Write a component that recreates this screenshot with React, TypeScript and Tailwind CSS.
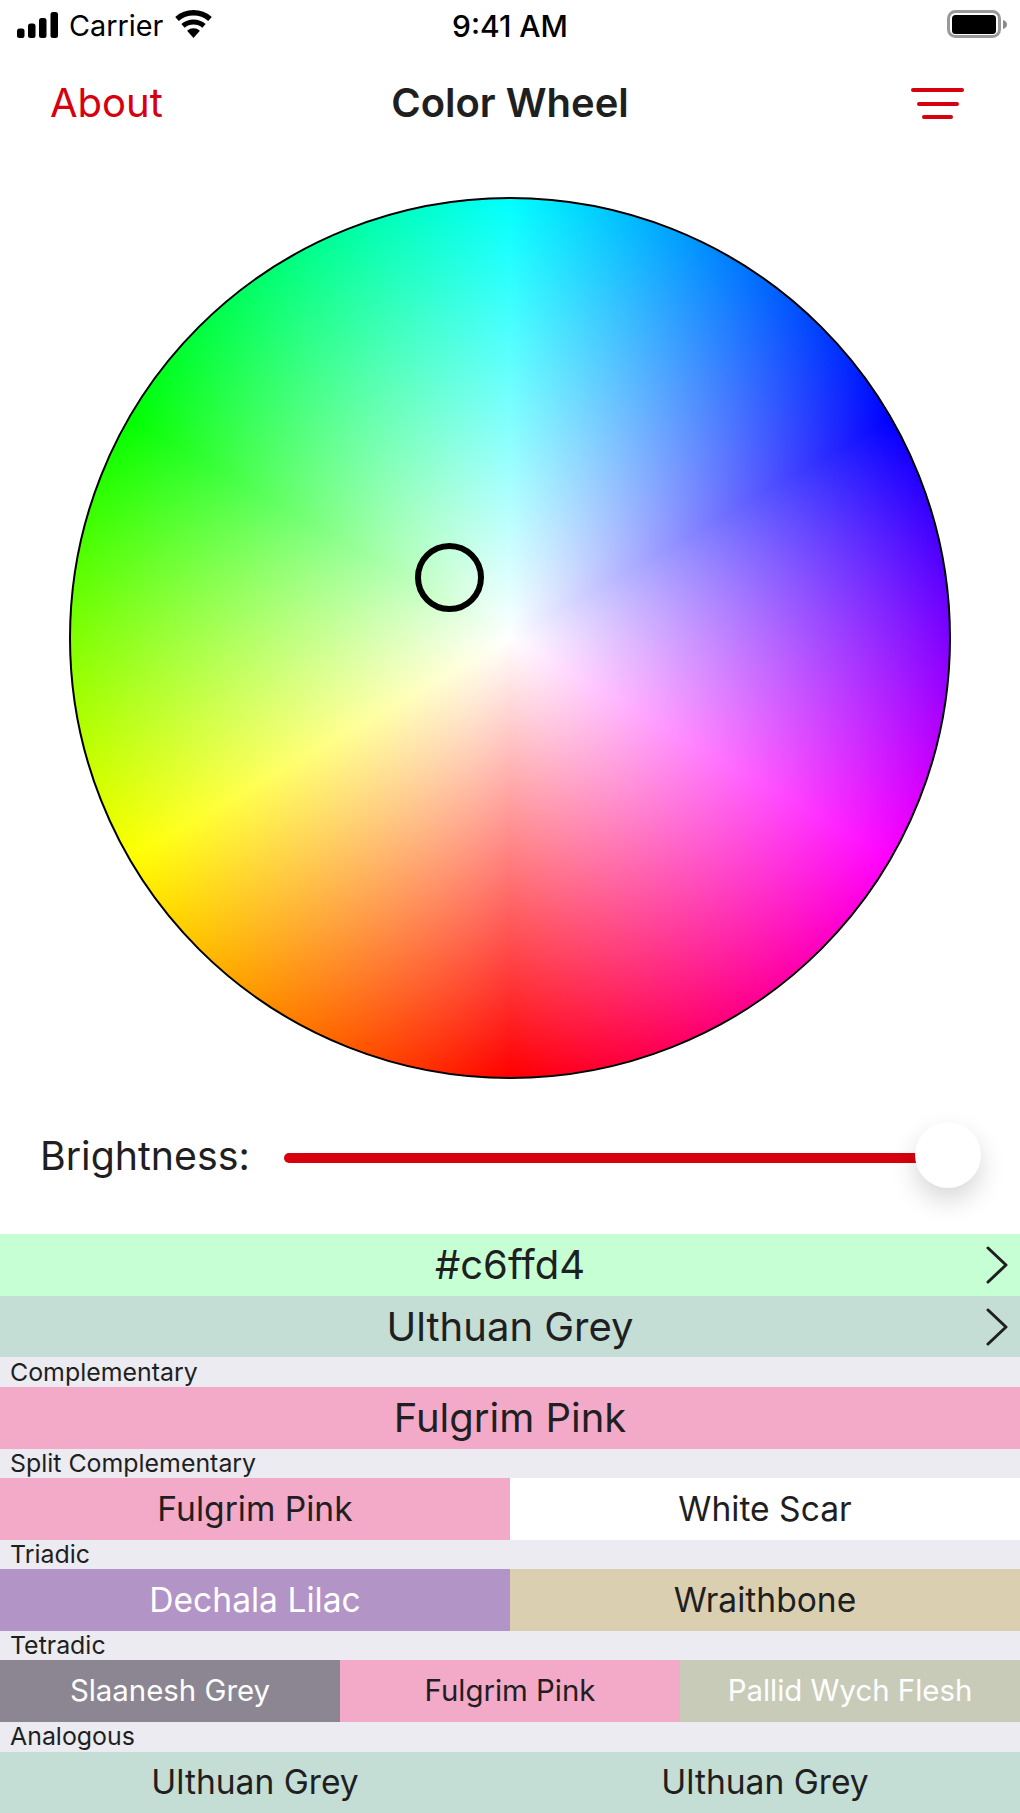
const font = "font-['Inter','Liberation_Sans',sans-serif]";

const StatusBar = () => (
  <div className="relative flex h-[52px] items-center justify-between pl-[17px] pr-[13px] text-black">
    <div className="flex items-center">
      <svg className="-mt-[2px]" width="41" height="26" viewBox="0 0 41 26" fill="black">
        <rect x="0" y="16.500" width="7.500" height="9.500" rx="2.500" />
        <rect x="11" y="11.500" width="7.500" height="14.500" rx="2.500" />
        <rect x="22" y="6" width="7.500" height="20" rx="2.500" />
        <rect x="33.500" y="0" width="7.500" height="26" rx="2.500" />
      </svg>
      <span className="ml-[11px] text-[28.800px] leading-none">Carrier</span>
      <svg className="-mt-[4px] ml-[12px]" width="37" height="28" viewBox="0 0 37 28" fill="none" stroke="black">
        <path d="M2 9 A25.200 25.200 0 0 1 35 9" strokeWidth="5.500" />
        <path d="M8 15.900 A16 16 0 0 1 29 15.900" strokeWidth="5" />
        <path d="M18.500 28 L12.100 20.700 A9.700 9.700 0 0 1 24.900 20.700 Z" fill="black" stroke="none" />
      </svg>
    </div>
    <span className="absolute left-[452px] text-[30px] font-medium leading-none">9:41 AM</span>
    <svg className="-mt-[4px]" width="60" height="28" viewBox="0 0 60 28" fill="none">
      <rect x="1.500" y="1.500" width="51" height="25" rx="7" stroke="#999" strokeWidth="3" />
      <rect x="5" y="5" width="44" height="19" rx="3.500" fill="black" />
      <path d="M56 10 C58.500 10.800 60 12.200 60 14.500 C60 16.800 58.500 18.200 56 19 Z" fill="#8a8a8a" />
    </svg>
  </div>
);

const NavBar = () => (
  <div className="relative flex h-[100px] items-center justify-between pl-[50px] pr-[56px] pt-[2px]">
    <span className="text-[40px] leading-none text-[#d6000e]">About</span>
    <span className="absolute inset-x-0 text-center text-[40px] font-semibold leading-none text-[#1f1f21]">
      Color Wheel
    </span>
    <div className="mt-[1px] flex flex-col items-center gap-[9.500px]">
      <div className="h-[4px] w-[53px] rounded-full bg-[#d6000e]" />
      <div className="h-[4px] w-[42px] rounded-full bg-[#d6000e]" />
      <div className="h-[4px] w-[31px] rounded-full bg-[#d6000e]" />
    </div>
  </div>
);

const Wheel = () => (
  <div className="relative mx-auto mt-[45px] h-[882px] w-[882px] rounded-full border-2 border-black bg-[radial-gradient(circle_closest-side,#ffffff_0%,rgba(255,255,255,0)_100%),conic-gradient(#00ffff,#0000ff_60deg,#ff00ff_120deg,#ff0000_180deg,#ffff00_240deg,#00ff00_300deg,#00ffff)]">
    <div className="absolute left-[344px] top-[344px] h-[69px] w-[69px] rounded-full border-[6px] border-black" />
  </div>
);

const Brightness = () => (
  <div className="mt-[44px] flex h-[66px] items-center pl-[40px] pr-[39px]">
    <span className="w-[244px] text-[39.300px] leading-none text-[#1f1f21]">Brightness:</span>
    <div className="relative mr-[33px] mt-[3px] h-[10px] flex-1 rounded-l-full bg-[#d6000e]">
      <div className="absolute right-[-33px] top-[-31px] h-[66px] w-[66px] rounded-full bg-white shadow-[0_12px_26px_rgba(0,0,0,0.16)]" />
    </div>
  </div>
);

const Chevron = () => (
  <svg className="absolute right-[11px] top-1/2 -translate-y-1/2" width="24" height="38" viewBox="0 0 24 38" fill="none" stroke="#1f1f21" strokeWidth="3" strokeLinecap="round" strokeLinejoin="round">
    <path d="M3 2 L21 19 L3 36" />
  </svg>
);

const Row = ({ bg, children, chevron, light, size = 'text-[33.600px]' }: { bg: string; children: React.ReactNode; chevron?: boolean; light?: boolean; size?: string }) => (
  <div className={`relative flex h-full flex-1 items-center justify-center ${bg} ${size} ${light ? 'text-white' : 'text-[#1f1f21]'}`}>
    {children}
    {chevron && <Chevron />}
  </div>
);

const Label = ({ children }: { children: React.ReactNode }) => (
  <div className="flex h-[29.500px] items-center bg-[#ebebf1] pl-[10px] text-[24.900px] leading-none text-[#1f1f21]">{children}</div>
);

const Swatches = ({ children }: { children: React.ReactNode }) => (
  <div className="flex h-[61.700px]">{children}</div>
);

export default function App() {
  return (
    <div className={`h-[1813px] w-[1020px] overflow-hidden bg-white ${font}`}>
      <StatusBar />
      <NavBar />
      <Wheel />
      <Brightness />
      <div className="mt-[45px]">
        <Swatches><Row bg="bg-[#c6ffd4]" size="text-[40px]" chevron>#c6ffd4</Row></Swatches>
        <Swatches><Row bg="bg-[#c4ddd5]" size="text-[40px]" chevron>Ulthuan Grey</Row></Swatches>
        <Label>Complementary</Label>
        <Swatches><Row bg="bg-[#f3a9c8]" size="text-[40px]">Fulgrim Pink</Row></Swatches>
        <Label>Split Complementary</Label>
        <Swatches>
          <Row bg="bg-[#f3a9c8]">Fulgrim Pink</Row>
          <Row bg="bg-white">White Scar</Row>
        </Swatches>
        <Label>Triadic</Label>
        <Swatches>
          <Row bg="bg-[#b394c7]" light>Dechala Lilac</Row>
          <Row bg="bg-[#dbcfb1]">Wraithbone</Row>
        </Swatches>
        <Label>Tetradic</Label>
        <Swatches>
          <Row bg="bg-[#8b8692]" size="text-[29.400px]" light>Slaanesh Grey</Row>
          <Row bg="bg-[#f3a9c8]" size="text-[29.400px]">Fulgrim Pink</Row>
          <Row bg="bg-[#c9cbb9]" size="text-[29.400px]" light>Pallid Wych Flesh</Row>
        </Swatches>
        <Label>Analogous</Label>
        <Swatches>
          <Row bg="bg-[#c4ddd5]">Ulthuan Grey</Row>
          <Row bg="bg-[#c4ddd5]">Ulthuan Grey</Row>
        </Swatches>
      </div>
    </div>
  );
}
